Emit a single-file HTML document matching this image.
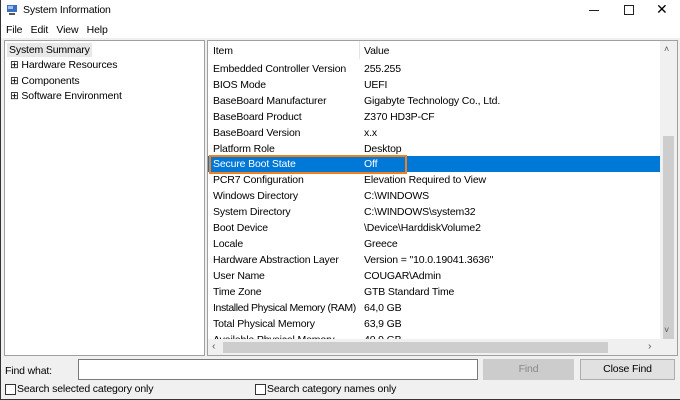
<!DOCTYPE html><html><head><style>
body{margin:0;width:680px;height:400px;overflow:hidden;font-family:"Liberation Sans",sans-serif;font-size:10.5px;letter-spacing:-0.15px;color:#000;background:#f0f0f0;position:relative}
.a{position:absolute}
.row{position:absolute;left:0;width:452px;height:16px;line-height:16px}
.row span{position:absolute}
.row .i{left:5px}.row .v{left:156px}
</style></head><body>
<div class="a" style="left:0;top:0;width:680px;height:38px;background:#fff"></div>
<div class="a" style="left:0;top:0;width:679px;height:399px;border:1px solid #333;border-top:none;box-sizing:content-box"></div>
<svg class="a" style="left:6px;top:4px" width="12" height="12"><rect x="1" y="1" width="10" height="7" fill="#3a6fc4"/><rect x="3" y="9" width="6" height="2" fill="#555"/><rect x="2" y="2" width="5" height="3" fill="#9cc3f0"/></svg>
<div class="a" style="left:23px;top:4px">System Information</div>
<div class="a" style="left:589px;top:10px;width:10px;height:1px;background:#222"></div>
<div class="a" style="left:624px;top:5px;width:8px;height:8px;border:1px solid #222"></div>
<div class="a" style="left:656px;top:1px;font-size:14px">✕</div>
<div class="a" style="left:6px;top:24px">File&nbsp;&nbsp;&nbsp;Edit&nbsp;&nbsp;&nbsp;View&nbsp;&nbsp;&nbsp;Help</div>
<div class="a" style="left:4px;top:40px;width:199px;height:314px;background:#fff;border:1px solid #a0a0a0"></div>
<div class="a" style="left:7px;top:43px;padding:0 2px;height:14px;line-height:14px;background:#e8e8e8">System Summary</div>
<div class="a" style="left:10px;top:58px;line-height:15.5px">⊞ Hardware Resources<br>⊞ Components<br>⊞ Software Environment</div>
<div class="a" style="left:207px;top:40px;width:469px;height:314px;background:#fff;border:1px solid #a0a0a0;overflow:hidden">
<div class="a" style="left:151px;top:0;width:1px;height:18px;background:#e5e5e5"></div>
<div class="row" style="top:2px"><span class="i">Item</span><span class="v">Value</span></div>
<div class="row" style="top:20px"><span class="i">Embedded Controller Version</span><span class="v">255.255</span></div>
<div class="row" style="top:36px"><span class="i">BIOS Mode</span><span class="v">UEFI</span></div>
<div class="row" style="top:52px"><span class="i">BaseBoard Manufacturer</span><span class="v">Gigabyte Technology Co., Ltd.</span></div>
<div class="row" style="top:68px"><span class="i">BaseBoard Product</span><span class="v">Z370 HD3P-CF</span></div>
<div class="row" style="top:84px"><span class="i">BaseBoard Version</span><span class="v">x.x</span></div>
<div class="row" style="top:100px"><span class="i">Platform Role</span><span class="v">Desktop</span></div>
<div class="row" style="top:115px;background:#0078d7;color:#fff"><span class="i">Secure Boot State</span><span class="v">Off</span></div>
<div class="a" style="left:1px;top:114px;width:194px;height:15px;border:2px solid #f08020"></div>
<div class="row" style="top:131px"><span class="i">PCR7 Configuration</span><span class="v">Elevation Required to View</span></div>
<div class="row" style="top:147px"><span class="i">Windows Directory</span><span class="v">C:\WINDOWS</span></div>
<div class="row" style="top:163px"><span class="i">System Directory</span><span class="v">C:\WINDOWS\system32</span></div>
<div class="row" style="top:179px"><span class="i">Boot Device</span><span class="v">\Device\HarddiskVolume2</span></div>
<div class="row" style="top:195px"><span class="i">Locale</span><span class="v">Greece</span></div>
<div class="row" style="top:211px"><span class="i">Hardware Abstraction Layer</span><span class="v">Version = "10.0.19041.3636"</span></div>
<div class="row" style="top:227px"><span class="i">User Name</span><span class="v">COUGAR\Admin</span></div>
<div class="row" style="top:243px"><span class="i">Time Zone</span><span class="v">GTB Standard Time</span></div>
<div class="row" style="top:259px"><span class="i" style="letter-spacing:-0.4px">Installed Physical Memory (RAM)</span><span class="v">64,0 GB</span></div>
<div class="row" style="top:275px"><span class="i">Total Physical Memory</span><span class="v">63,9 GB</span></div>
<div class="row" style="top:291px"><span class="i">Available Physical Memory</span><span class="v">40,9 GB</span></div>
<div class="a" style="left:452px;top:0;width:17px;height:298px;background:#f0f0f0"></div>
<div class="a" style="left:455px;top:95px;width:11px;height:203px;background:#cdcdcd"></div>
<div class="a" style="left:456px;top:3px;font-size:9px;color:#555">˄</div>
<div class="a" style="left:456px;top:284px;font-size:9px;color:#555">˅</div>
<div class="a" style="left:0;top:298px;width:469px;height:16px;background:#f0f0f0"></div>
<div class="a" style="left:15px;top:301px;width:385px;height:11px;background:#cdcdcd"></div>
<div class="a" style="left:4px;top:299px;color:#555">‹</div>
<div class="a" style="left:440px;top:299px;color:#555">›</div>
</div>
<div class="a" style="left:5px;top:365px">Find what:</div>
<div class="a" style="left:78px;top:359px;width:398px;height:19px;background:#fff;border:1px solid #7a7a7a"></div>
<div class="a" style="left:483px;top:359px;width:91px;height:21px;background:#cccccc;color:#888;text-align:center;line-height:21px">Find</div>
<div class="a" style="left:580px;top:359px;width:93px;height:19px;background:#e1e1e1;border:1px solid #adadad;text-align:center;line-height:19px">Close Find</div>
<div class="a" style="left:5px;top:384px;width:9px;height:9px;border:1px solid #333;background:#fff"></div>
<div class="a" style="left:17px;top:383px">Search selected category only</div>
<div class="a" style="left:255px;top:384px;width:9px;height:9px;border:1px solid #333;background:#fff"></div>
<div class="a" style="left:267px;top:383px">Search category names only</div>
</body></html>
